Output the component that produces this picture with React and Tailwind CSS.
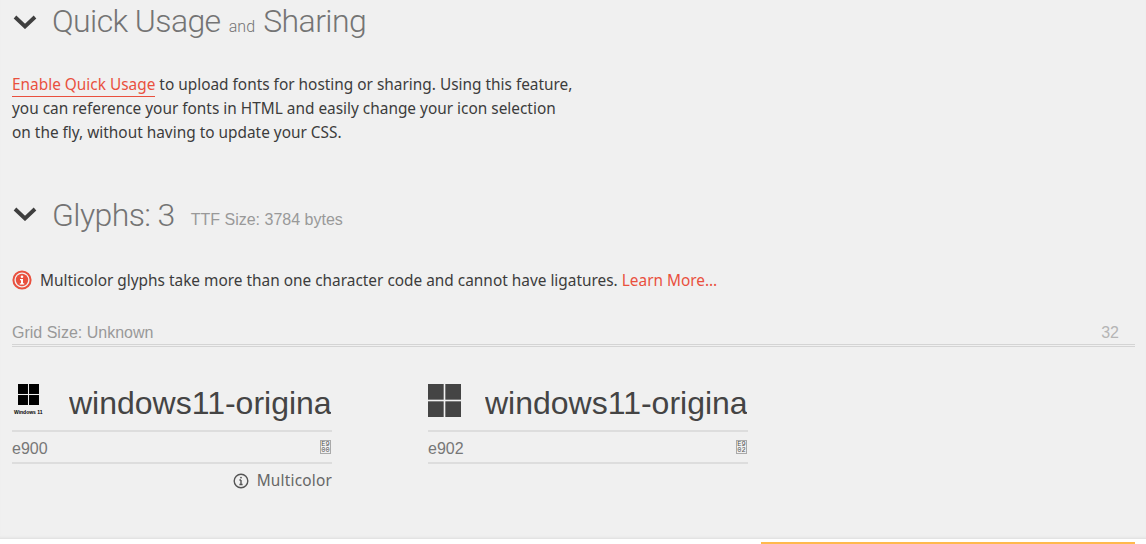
const body = "font-['Noto_Sans','Open_Sans',sans-serif]";
const arial = "font-['Liberation_Sans',Arial,sans-serif]";

function Chevron() {
  return (
    <svg width="24" height="14" viewBox="0 0 24 14" className="shrink-0 text-[#3f3f3f]" fill="none" stroke="currentColor" strokeWidth="3.8">
      <path d="M2 2 L12 11.5 L22 2" />
    </svg>
  );
}

function Heading({ children, className, titleClass }) {
  return (
    <div className={`flex items-center ${className}`}>
      <Chevron />
      <h2 className={`ml-[15px] font-['Roboto',sans-serif] font-light text-[32px] tracking-[-0.6px] leading-[44px] text-[#747474] whitespace-nowrap ${titleClass}`}>
        {children}
      </h2>
    </div>
  );
}

function WinLogo({ label }) {
  const size = label ? 21 : 33;
  return (
    <svg width={size} height={size} viewBox="0 0 32 32" className="block" fill={label ? "#000" : "#444"}>
      <rect x="0" y="0" width="15.2" height="15.2" />
      <rect x="16.8" y="0" width="15.2" height="15.2" />
      <rect x="0" y="16.8" width="15.2" height="15.2" />
      <rect x="16.8" y="16.8" width="15.2" height="15.2" />
    </svg>
  );
}

function Code({ a, b }) {
  return (
    <div className="w-[11px] h-[14px] border border-[#aaa] flex flex-col items-center justify-center font-['Liberation_Mono',monospace] text-[7px] leading-[6px] text-[#555]">
      <span>{a}</span>
      <span>{b}</span>
    </div>
  );
}

function Card({ multi, code, a, b }) {
  return (
    <div className="w-[320px]">
      <div className="h-[64px] flex items-start border-b-2 border-[#dddddd] overflow-hidden">
        {multi ? (
          <div className="w-[57px] pt-[16px] flex flex-col items-start">
            <div className="ml-[6px]"><WinLogo label /></div>
            <span className={`ml-[2px] mt-[4px] ${arial} font-bold text-[5px] leading-[6px] text-black whitespace-nowrap`}>Windows 11</span>
          </div>
        ) : (
          <div className="w-[57px] pt-[16px]"><WinLogo /></div>
        )}
        <div className={`${arial} text-[32px] leading-[70px] text-[#444] whitespace-nowrap overflow-hidden w-[262px]`}>
          windows11-origina
        </div>
      </div>
      <div className="h-[32px] flex items-center justify-between border-b-2 border-[#dddddd] pr-[1px]">
        <span className={`${arial} text-base pt-[4px] text-[#777]`}>{code}</span>
        <Code a={a} b={b} />
      </div>
      {multi && (
        <div className={`h-[34px] flex items-center justify-end gap-2 ${body} text-[15.4px] tracking-[0.2px] text-[#666]`}>
          <svg width="16" height="16" viewBox="0 0 16 16" fill="none" stroke="#555" strokeWidth="1.4">
            <circle cx="8" cy="8" r="6.8" />
            <path d="M8 7v4.4M6.4 7H8M6.4 11.5h3.2" />
            <circle cx="8" cy="4.6" r="0.9" fill="#555" stroke="none" />
          </svg>
          <span>Multicolor</span>
        </div>
      )}
    </div>
  );
}

export default function App() {
  return (
    <div className="w-[1146px] h-[544px] overflow-hidden bg-white flex flex-col">
      <div className={`h-[539px] shrink-0 bg-[#f0f0f0] shadow-[inset_0_-3px_3px_-2px_#dcdcdc] px-[12px] ${body}`}>
        <Heading className="pl-[1px] h-[44px]" titleClass="mt-[4px]">
          Quick Usage <span className="text-[16px] mx-[1px] tracking-normal">and</span> Sharing
        </Heading>
        <p className="mt-[29px] text-[15.4px] leading-[24px] text-[#3c3c3c]">
          <a className="text-[#e9503e] border-b border-[#e9503e] pb-[1px]">Enable Quick Usage</a> to upload fonts for hosting or sharing. Using this feature,<br />
          you can reference your fonts in HTML and easily change your icon selection<br />
          on the fly, without having to update your CSS.
        </p>
        <Heading className="pl-[1px] mt-[47px] h-[44px]" titleClass="mt-[2px]">
          <span>Glyphs: 3</span>
          <span className={`${arial} ml-[16px] text-base tracking-normal align-[1px] text-[#999]`}>TTF Size: 3784 bytes</span>
        </Heading>
        <div className="mt-[32px] h-[24px] flex items-center text-[15.4px] text-[#3c3c3c]">
          <svg width="20" height="20" viewBox="0 0 20 20" className="mr-[8px] shrink-0">
            <circle cx="10" cy="10" r="8.6" fill="none" stroke="#e9503e" strokeWidth="2" />
            <circle cx="10" cy="10" r="6.2" fill="#e9503e" />
            <circle cx="10" cy="6.7" r="1.3" fill="#fff" />
            <path d="M8 9h3v4.2h1.2v1.2H7.8v-1.2H9V10.2H8z" fill="#fff" />
          </svg>
          <span className="pt-[2px]">Multicolor glyphs take more than one character code and cannot have ligatures. <a className="text-[#e9503e]">Learn More…</a></span>
        </div>
        <div className={`mt-[30px] h-[25px] mr-[-1px] flex justify-between items-center border-b-[3px] border-double border-[#d4d4d4] ${arial} text-base`}>
          <span className="text-[#999]">Grid Size: Unknown</span>
          <span className="text-[#b5b5b5] mr-[16px]">32</span>
        </div>
        <div className="flex gap-[96px] mt-[21px]">
          <Card multi code="e900" a="E9" b="00" />
          <Card code="e902" a="E9" b="02" />
        </div>
      </div>
      <div className="mt-[3px] ml-[761px] w-[374px] h-[2px] bg-[#ffb94d]" />
    </div>
  );
}
